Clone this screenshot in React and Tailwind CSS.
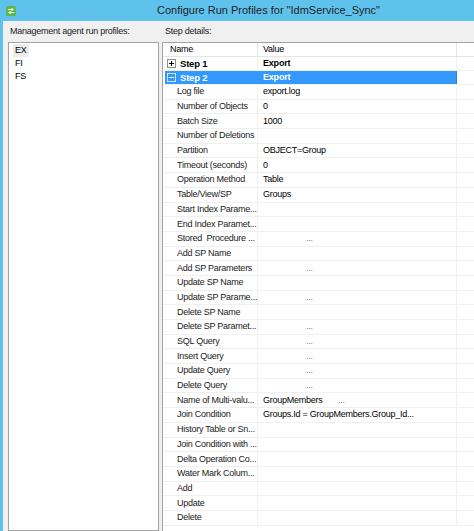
const profiles = ["EX", "FI", "FS"]

const DOTS = "..."

const properties = [
  ["Log file", "export.log"],
  ["Number of Objects", "0"],
  ["Batch Size", "1000"],
  ["Number of Deletions", ""],
  ["Partition", "OBJECT=Group"],
  ["Timeout (seconds)", "0"],
  ["Operation Method", "Table"],
  ["Table/View/SP", "Groups"],
  ["Start Index Parame...", ""],
  ["End Index Paramet...", ""],
  ["Stored  Procedure ...", DOTS],
  ["Add SP Name", ""],
  ["Add SP Parameters", DOTS],
  ["Update SP Name", ""],
  ["Update SP Parame...", DOTS],
  ["Delete SP Name", ""],
  ["Delete SP Paramet...", DOTS],
  ["SQL Query", DOTS],
  ["Insert Query", DOTS],
  ["Update Query", DOTS],
  ["Delete Query", DOTS],
  ["Name of Multi-valu...", "multi"],
  ["Join Condition", "Groups.Id = GroupMembers.Group_Id..."],
  ["History Table or Sn...", ""],
  ["Join Condition with ...", ""],
  ["Delta Operation Co...", ""],
  ["Water Mark Colum...", ""],
  ["Add", ""],
  ["Update", ""],
  ["Delete", ""],
]

const AppIcon = () => (
  <svg width="10" height="10" viewBox="0 0 10 10">
    <rect x="0" y="0" width="10" height="10" rx="1.5" fill="#5bb84a" />
    <path d="M2 3.5h5M5.5 2l1.5 1.5L5.5 5" stroke="#fff" strokeWidth="1" fill="none" />
    <path d="M8 6.5H3M4.5 5L3 6.5 4.5 8" stroke="#fff" strokeWidth="1" fill="none" />
  </svg>
)

const Expander = ({ open }) => (
  <svg width="9" height="9" viewBox="0 0 9 9" className="shrink-0">
    {open ? (
      <>
        <rect x="0.5" y="0.5" width="8" height="8" fill="none" stroke="#cfe4ff" />
        <path d="M2 4.5h5" stroke="#fff" />
      </>
    ) : (
      <>
        <rect x="0.5" y="0.5" width="8" height="8" fill="#fff" stroke="#8f8f8f" />
        <path d="M2 4.5h5M4.5 2v5" stroke="#000" />
      </>
    )}
  </svg>
)

const Value = ({ value }) => {
  if (value === DOTS) {
    return <span className="ml-[43px] text-[#7a7a7a]">...</span>
  }
  if (value === "multi") {
    return (
      <>
        <span className="inline-block w-[75px]">GroupMembers</span>
        <span className="text-[#7a7a7a]">...</span>
      </>
    )
  }
  return <span>{value}</span>
}

const StepRow = ({ label, selected }) => (
  <div className="flex h-[14px] border-b border-[#f0f0f0]">
    <div className="w-[2px]" />
    <div className={`flex w-[292px] ${selected ? "bg-[#3399ff] text-white" : ""}`}>
      <div className={`w-[93px] flex items-center pl-[2px] gap-[4px] border-r ${selected ? "border-transparent" : "border-[#f0f0f0]"}`}>
        <Expander open={selected} />
        <span className="font-bold text-[9.5px] tracking-[-0.2px]">{label}</span>
      </div>
      <div className={`w-[199px] flex items-center pl-[5px] font-bold tracking-[-0.2px] border-r ${selected ? "border-[#2a7fd6]" : "border-[#f0f0f0]"}`}>
        Export
      </div>
    </div>
    <div className="flex-1" />
  </div>
)

const PropRow = ({ name, value }) => (
  <div className="flex h-[14.7px] border-b border-[#f0f0f0]">
    <div className="w-[2px]" />
    <div className="w-[93px] flex items-center pl-[12px] border-r border-[#f0f0f0] whitespace-pre text-[#1a1a1a]">
      {name}
    </div>
    <div className="w-[199px] flex items-center pl-[5px] border-r border-[#f0f0f0] whitespace-pre">
      <Value value={value} />
    </div>
    <div className="flex-1" />
  </div>
)

const App = () => {
  return (
    <div
      className="w-[474px] h-[531px] overflow-hidden bg-[#5fc2ec] flex flex-col text-black"
      style={{ fontFamily: '"Liberation Sans", Arial, sans-serif' }}
    >
      <div className="h-[21px] shrink-0 flex items-center">
        <div className="ml-[6px]">
          <AppIcon />
        </div>
        <span className="ml-[141px] text-[11px] text-[#1e1e1e] leading-none">
          Configure Run Profiles for "IdmService_Sync"
        </span>
      </div>

      <div className="flex-1 min-h-0 ml-[3px] bg-[#f0f0f0] flex text-[9px] tracking-[-0.25px] leading-none">
        <div className="w-[156px] shrink-0 pl-[5px] flex flex-col">
          <div className="h-[21px] shrink-0 flex items-center pl-[2px] text-[#1a1a1a]">
            Management agent run profiles:
          </div>
          <div className="flex-1 border border-[#a3a3a3] bg-white pt-[1px] pl-[4px]">
            {profiles.map((p, i) => (
              <div key={p} className="h-[13px] flex items-center">
                <span className={`px-[2px] py-[2px] ${i === 0 ? "bg-[#ececec]" : ""}`}>{p}</span>
              </div>
            ))}
          </div>
        </div>

        <div className="flex-1 min-w-0 pl-[3px] flex flex-col">
          <div className="h-[21px] shrink-0 flex items-center pl-[3px] text-[#1a1a1a]">
            Step details:
          </div>
          <div className="flex-1 border-l border-t border-[#a3a3a3] bg-white overflow-hidden">
            <div className="flex h-[14px] border-b border-[#e5e5e5]">
              <div className="w-[95px] flex items-center pl-[7px] border-r border-[#e5e5e5]">Name</div>
              <div className="w-[199px] flex items-center pl-[5px] border-r border-[#e5e5e5]">Value</div>
              <div className="flex-1" />
            </div>
            <StepRow label="Step 1" />
            <StepRow label="Step 2" selected />
            {properties.map(([name, value]) => (
              <PropRow key={name} name={name} value={value} />
            ))}
          </div>
        </div>
      </div>
    </div>
  )
}

export default App
